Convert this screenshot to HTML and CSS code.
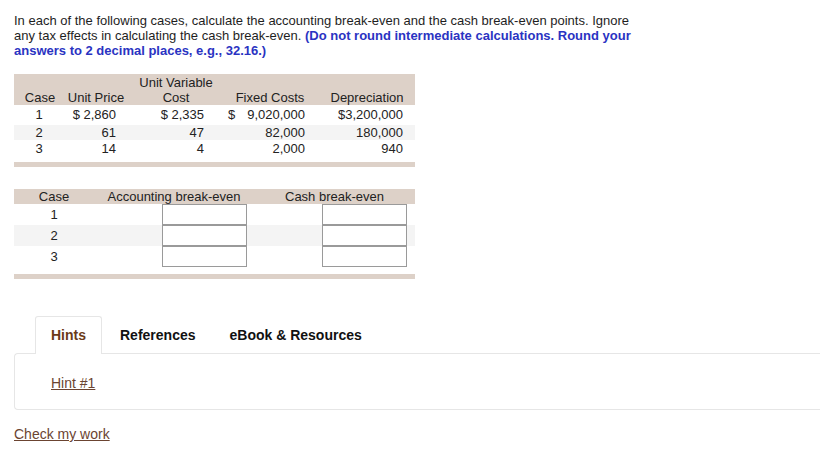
FILE: index.html
```html
<!DOCTYPE html>
<html lang="en">
<head>
<meta charset="utf-8">
<title>Break-even</title>
<link rel="stylesheet" href="styles.css">
</head>
<body>
<div class="page">
  <p class="intro">In each of the following cases, calculate the accounting break-even and the cash break-even points. Ignore any tax effects in calculating the cash break-even. <strong class="note">(Do not round intermediate calculations. Round your answers to 2 decimal places, e.g., 32.16.)</strong></p>

  <table class="given">
    <colgroup>
      <col class="c1"><col class="c2"><col class="c3"><col class="c4"><col class="c5">
    </colgroup>
    <thead>
      <tr>
        <th>Case</th>
        <th>Unit Price</th>
        <th>Unit Variable<br>Cost</th>
        <th>Fixed Costs</th>
        <th class="dep">Depreciation</th>
      </tr>
    </thead>
    <tbody>
      <tr class="r1">
        <td class="case">1</td>
        <td class="price">$&nbsp;2,860</td>
        <td class="var">$&nbsp;2,335</td>
        <td class="fixed"><span class="cur">$</span>9,020,000</td>
        <td class="depv">$3,200,000</td>
      </tr>
      <tr class="r2">
        <td class="case">2</td>
        <td class="price">61</td>
        <td class="var">47</td>
        <td class="fixed">82,000</td>
        <td class="depv">180,000</td>
      </tr>
      <tr class="r3">
        <td class="case">3</td>
        <td class="price">14</td>
        <td class="var">4</td>
        <td class="fixed">2,000</td>
        <td class="depv">940</td>
      </tr>
    </tbody>
  </table>

  <table class="answers">
    <colgroup>
      <col class="a1"><col class="a2"><col class="a3">
    </colgroup>
    <thead>
      <tr>
        <th>Case</th>
        <th>Accounting break-even</th>
        <th>Cash break-even</th>
      </tr>
    </thead>
    <tbody>
      <tr>
        <td class="case">1</td>
        <td class="acc"><input type="text" aria-label="Accounting break-even case 1"></td>
        <td class="cash"><input type="text" aria-label="Cash break-even case 1"></td>
      </tr>
      <tr class="alt">
        <td class="case">2</td>
        <td class="acc"><input type="text" aria-label="Accounting break-even case 2"></td>
        <td class="cash"><input type="text" aria-label="Cash break-even case 2"></td>
      </tr>
      <tr>
        <td class="case">3</td>
        <td class="acc"><input type="text" aria-label="Accounting break-even case 3"></td>
        <td class="cash"><input type="text" aria-label="Cash break-even case 3"></td>
      </tr>
    </tbody>
  </table>

  <div class="tabs">
    <div class="tab active">Hints</div>
    <div class="tab">References</div>
    <div class="tab">eBook &amp; Resources</div>
  </div>
  <div class="panel">
    <a class="link" href="#">Hint #1</a>
  </div>

  <a class="link check" href="#">Check my work</a>
</div>
</body>
</html>
```

FILE: styles.css
```css
html, body {
  margin: 0;
  padding: 0;
  background: #fff;
}

body {
  font-family: "Liberation Sans", Arial, sans-serif;
  color: #222;
}

.page {
  padding: 13px 0 0 14px;
}

.intro {
  margin: 0;
  width: 630px;
  font-size: 13px;
  line-height: 15px;
  color: #1e1e1e;
}

.note {
  color: #2a33c2;
  font-weight: bold;
}

/* given data table */
.given,
.answers {
  width: 401px;
  border-collapse: collapse;
  table-layout: fixed;
  font-size: 13px;
  line-height: 15px;
  color: #222;
}

.given {
  margin-top: 16px;
  border-bottom: 5px solid #ddd1c8;
}

.given th,
.given td,
.answers th,
.answers td {
  padding: 0;
  font-weight: normal;
}

.c1 { width: 52px; }
.c2 { width: 60px; }
.c3 { width: 100px; }
.c4 { width: 88px; }
.c5 { width: 101px; }

.given thead th {
  background: #ddd1c8;
  text-align: center;
  vertical-align: bottom;
  height: 30px;
  padding-top: 1px;
}

.given thead th.dep {
  padding-left: 5px;
}

.given td.case { text-align: center; padding-right: 2px; }
.given td.price { text-align: right; padding-right: 10px; }
.given td.var { text-align: right; padding-right: 22px; }
.given td.fixed { text-align: right; padding-left: 2px; padding-right: 9px; }
.given td.depv { text-align: right; padding-right: 12px; }

.cur { float: left; }

.given .r1 td { padding-top: 2px; padding-bottom: 3px; }
.given .r2 td { background: #f4f4f4; }
.given .r3 td { padding-top: 1px; padding-bottom: 6px; }

/* answers table */
.answers {
  margin-top: 22px;
  border-bottom: 5px solid #ddd1c8;
}

.a1 { width: 80px; }
.a2 { width: 160px; }
.a3 { width: 161px; }

.answers thead th {
  background: #ddd1c8;
  text-align: center;
  height: 15px;
}

.answers tbody td {
  height: 21px;
  vertical-align: middle;
}

.answers tbody tr:last-child td {
  padding-bottom: 7px;
}

.answers td.case { text-align: center; }
.answers td.acc { text-align: right; padding-right: 7px; }
.answers td.cash { text-align: right; padding-right: 8px; }

.answers tr.alt td { background: #f4f4f4; }

.answers input {
  display: block;
  margin-left: auto;
  box-sizing: border-box;
  width: 85px;
  height: 21px;
  border: 1px solid #9a9a9a;
  border-radius: 0;
  padding: 0 4px;
  background: #fff;
  font: 13px "Liberation Sans", Arial, sans-serif;
}

/* tabs */
.tabs {
  display: flex;
  margin-top: 37px;
  padding-left: 21px;
  margin-bottom: -1px;
  position: relative;
}

.tab {
  font-size: 14px;
  line-height: 18px;
  font-weight: bold;
  color: #111;
  padding: 9px 15px 9px;
  border: 1px solid transparent;
  border-bottom: 0;
  margin-right: 2px;
}

.tab.active {
  color: #6b3a17;
  background: #fff;
  border-color: #e6e6e6;
  border-radius: 3px 3px 0 0;
  padding-bottom: 10px;
}

.panel {
  border: 1px solid #e6e6e6;
  border-right: 0;
  border-radius: 4px 0 0 4px;
  padding: 20px 0 17px 36px;
}

.link {
  font-size: 14px;
  line-height: 18px;
  color: #6b4431;
  text-decoration: underline;
}

.panel .link {
  display: inline-block;
}

.check {
  display: inline-block;
  margin-top: 15px;
}
```
